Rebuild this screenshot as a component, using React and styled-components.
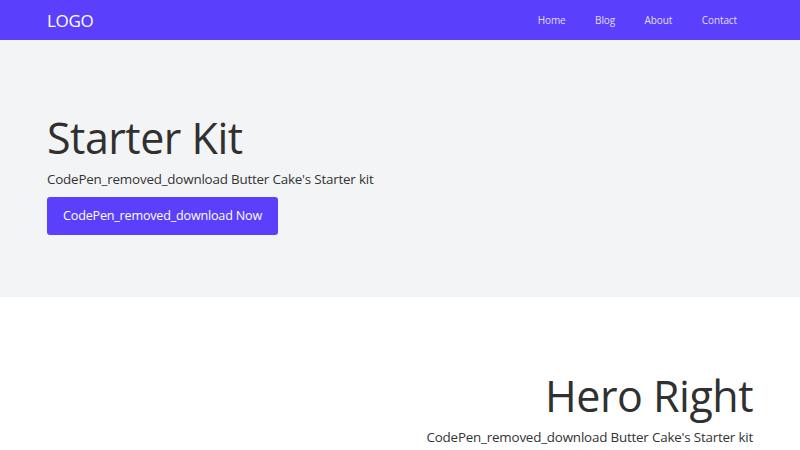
import React from "react";
import styled, { createGlobalStyle } from "styled-components";

const Global = createGlobalStyle`
  html, body { margin: 0; padding: 0; }
  body { font-family: "Open Sans", "Noto Sans", sans-serif; color: #333; background: #fff; }
`;

const Nav = styled.nav`
  height: 40px;
  background: #5a3ffc;
  display: flex;
  align-items: center;
  justify-content: space-between;
  padding: 0 47px;
`;

const Logo = styled.div`
  color: #fff;
  font-size: 17px;
  letter-spacing: -0.3px;
`;

const Links = styled.ul`
  display: flex;
  list-style: none;
  margin: 0;
  padding: 0;
  gap: 29.5px;
  margin-right: 16px;
`;

const LinkItem = styled.li`
  color: #e4defe;
  font-size: 10px;
  letter-spacing: -0.1px;
`;

const Hero = styled.section`
  background: ${(p) => p.$bg};
  height: ${(p) => p.$h}px;
  padding: ${(p) => p.$pt}px 47px 0;
  display: flex;
  flex-direction: column;
  align-items: ${(p) => (p.$right ? "flex-end" : "flex-start")};
  box-sizing: border-box;
`;

const Title = styled.h1`
  margin: 0;
  font-weight: 400;
  font-size: 43px;
  line-height: 1.2;
  color: #303030;
  letter-spacing: -0.5px;
`;

const Sub = styled.p`
  margin: 6px 0 0;
  font-size: 13.4px;
  color: #333;
  letter-spacing: -0.2px;
`;

const Button = styled.button`
  margin-top: 9px;
  width: 231px;
  height: 38px;
  flex-shrink: 0;
  border: none;
  border-radius: 3px;
  background: #5a3ffc;
  color: #fff;
  font-family: inherit;
  font-size: 12.6px;
  letter-spacing: -0.2px;
`;

export default function App() {
  return (
    <>
      <Global />
      <Nav>
        <Logo>LOGO</Logo>
        <Links>
          <LinkItem>Home</LinkItem>
          <LinkItem>Blog</LinkItem>
          <LinkItem>About</LinkItem>
          <LinkItem>Contact</LinkItem>
        </Links>
      </Nav>
      <Hero $bg="#f3f4f6" $h={257} $pt={72}>
        <Title>Starter Kit</Title>
        <Sub>CodePen_removed_download Butter Cake's Starter kit</Sub>
        <Button>CodePen_removed_download Now</Button>
      </Hero>
      <Hero $bg="#fff" $h={200} $pt={73} $right>
        <Title>Hero Right</Title>
        <Sub>CodePen_removed_download Butter Cake's Starter kit</Sub>
      </Hero>
    </>
  );
}
